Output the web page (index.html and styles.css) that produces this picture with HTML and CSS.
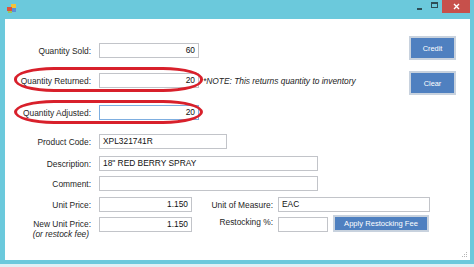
FILE: index.html
```html
<!DOCTYPE html>
<html lang="en">
<head>
  <meta charset="UTF-8" />
  <title>Credit Item</title>
  <link rel="stylesheet" href="styles.css">
</head>
<body>
  <div class="window">
    <div class="title-bar">
      <svg class="app-icon" width="10" height="9" viewBox="0 0 10 9">
        <rect x="4" y="0" width="5" height="4" fill="#f2c23a" />
        <rect x="0" y="3" width="5" height="4" fill="#e0533b" />
        <rect x="5" y="4" width="4" height="4" fill="#5b8fd6" />
        <rect x="1" y="7" width="4" height="2" fill="#9ac45a" />
      </svg>
      <div class="ctl ctl-min"><span class="dash"></span></div>
      <div class="ctl ctl-max"><span class="box"></span></div>
      <div class="ctl ctl-close">
        <svg width="7" height="7" viewBox="0 0 7 7">
          <path d="M1 1 L6 6 M6 1 L1 6" stroke="#fff" stroke-width="1.4" />
        </svg>
      </div>
    </div>

    <div class="client">
      <div class="form">
        <div class="row row-sold">
          <label class="lbl">Quantity Sold:</label>
          <div class="field num w-qty">60</div>
        </div>
        <div class="row row-returned">
          <span class="circle"></span>
          <label class="lbl">Quantity Returned:</label>
          <div class="field num w-qty">20</div>
          <span class="note">*NOTE: This returns quantity to inventory</span>
        </div>
        <div class="row row-adjusted">
          <span class="circle"></span>
          <label class="lbl">Quantity Adjusted:</label>
          <div class="field num w-qty focused">20</div>
        </div>
        <div class="row row-code">
          <label class="lbl">Product Code:</label>
          <div class="field w-code">XPL321741R</div>
        </div>
        <div class="row row-desc">
          <label class="lbl">Description:</label>
          <div class="field w-desc">18" RED BERRY SPRAY</div>
        </div>
        <div class="row row-comment">
          <label class="lbl">Comment:</label>
          <div class="field w-desc"></div>
        </div>
        <div class="row row-price">
          <label class="lbl">Unit Price:</label>
          <div class="field num w-price">1.150</div>
          <label class="lbl2">Unit of Measure:</label>
          <div class="field w-uom">EAC</div>
        </div>
        <div class="row row-newprice">
          <div class="lbl lbl-stack">
            <span>New Unit Price:</span>
            <span class="sub">(or restock fee)</span>
          </div>
          <div class="field num w-price">1.150</div>
          <label class="lbl2">Restocking %:</label>
          <div class="field w-pct"></div>
          <button class="btn btn-fee">Apply Restocking Fee</button>
        </div>
      </div>

      <div class="actions">
        <button class="btn btn-side">Credit</button>
        <button class="btn btn-side">Clear</button>
      </div>

      <svg class="grip" width="6" height="6" viewBox="0 0 6 6">
        <rect x="4" y="0" width="1" height="1" fill="#b5b5b5" />
        <rect x="2" y="2" width="1" height="1" fill="#b5b5b5" />
        <rect x="4" y="2" width="1" height="1" fill="#b5b5b5" />
        <rect x="0" y="4" width="1" height="1" fill="#b5b5b5" />
        <rect x="2" y="4" width="1" height="1" fill="#b5b5b5" />
        <rect x="4" y="4" width="1" height="1" fill="#b5b5b5" />
      </svg>
    </div>

    <div class="task-strip"></div>
  </div>
</body>
</html>
```

FILE: styles.css
```css
body {
  margin: 0;
  font-family: "Liberation Sans", Arial, sans-serif;
  font-size: 8.4px;
  color: #262626;
  background-color: #6bc9dc;
}

.window {
  width: 474px;
  height: 267px;
  display: flex;
  flex-direction: column;
  background-color: #6bc9dc;
  overflow: hidden;
}

.title-bar {
  height: 19px;
  flex-shrink: 0;
  display: grid;
  grid-template-columns: 1fr 14px 16px 28px;
  align-items: start;
  padding-left: 7px;
  padding-right: 4px;
  box-sizing: border-box;
}

.app-icon {
  margin-top: 4px;
}

.ctl {
  height: 13px;
  display: flex;
  align-items: center;
  justify-content: center;
}

.ctl-min .dash {
  width: 5px;
  height: 2px;
  margin-top: 5px;
  background-color: #2d4e57;
}

.ctl-max .box {
  width: 5px;
  height: 3px;
  margin-top: -3px;
  border: 1px solid #2d4e57;
  border-top-width: 2px;
}

.ctl-close {
  background-color: #c7504b;
}

.client {
  position: relative;
  margin: 0 4px 0 5px;
  height: 241px;
  flex-shrink: 0;
  background-color: #fff;
  display: flex;
}

.form {
  flex: 1;
  min-width: 0;
  display: flex;
  flex-direction: column;
}

.row {
  position: relative;
  display: flex;
  align-items: center;
  height: 15px;
}

.row-sold { margin-top: 24px; }
.row-returned { margin-top: 15px; }
.row-adjusted { margin-top: 17px; }
.row-code { margin-top: 14px; }
.row-desc { margin-top: 7px; }
.row-comment { margin-top: 5px; }
.row-price { margin-top: 6px; }
.row-newprice { margin-top: 5px; align-items: flex-start; }

.lbl {
  width: 86px;
  text-align: right;
  margin-right: 8px;
  flex-shrink: 0;
}

.lbl-stack {
  display: flex;
  flex-direction: column;
  align-items: flex-end;
  line-height: 10px;
  margin-top: 2px;
}

.lbl-stack .sub {
  font-style: italic;
  margin-right: 2px;
}

.lbl2 {
  width: 81px;
  text-align: right;
  margin-right: 5px;
  flex-shrink: 0;
}

.field {
  height: 15px;
  flex-shrink: 0;
  box-sizing: border-box;
  border: 1px solid #c2c4c9;
  background-color: #fff;
  padding: 0 3px;
  line-height: 13px;
  white-space: nowrap;
  color: #111;
}

.field.num {
  text-align: right;
}

.field.focused {
  border-color: #7eaee0;
}

.w-qty { width: 100px; }
.w-code { width: 128px; }
.w-desc { width: 219px; }
.w-price { width: 93px; }
.w-uom { width: 152px; }
.w-pct { width: 50px; }

.note {
  margin-left: 4px;
  font-style: italic;
  white-space: nowrap;
  color: #222;
}

.circle {
  position: absolute;
  left: 9px;
  top: -6px;
  width: 189px;
  height: 25px;
  box-sizing: border-box;
  border: 3px solid #d8202b;
  border-radius: 40px / 12px;
}

.row-adjusted .circle {
  top: -5px;
  height: 24px;
}

.btn {
  font-family: "Liberation Sans", Arial, sans-serif;
  background-color: #4f80c0;
  color: #fff;
  border: 2px solid #c8d2de;
  box-sizing: border-box;
  padding: 0;
  flex-shrink: 0;
  white-space: nowrap;
  cursor: pointer;
}

.btn-fee {
  width: 96px;
  height: 17px;
  margin-left: 5px;
  font-size: 7.6px;
  margin-top: -2px;
}

.actions {
  display: flex;
  flex-direction: column;
  flex-shrink: 0;
  gap: 11px;
  margin: 17px 14px 0 0;
}

.btn-side {
  width: 47px;
  height: 24px;
  font-size: 7.4px;
}

.grip {
  position: absolute;
  right: 2px;
  bottom: 2px;
}

.task-strip {
  margin-top: 4px;
  height: 3px;
  background-color: #dff0f4;
}
```
